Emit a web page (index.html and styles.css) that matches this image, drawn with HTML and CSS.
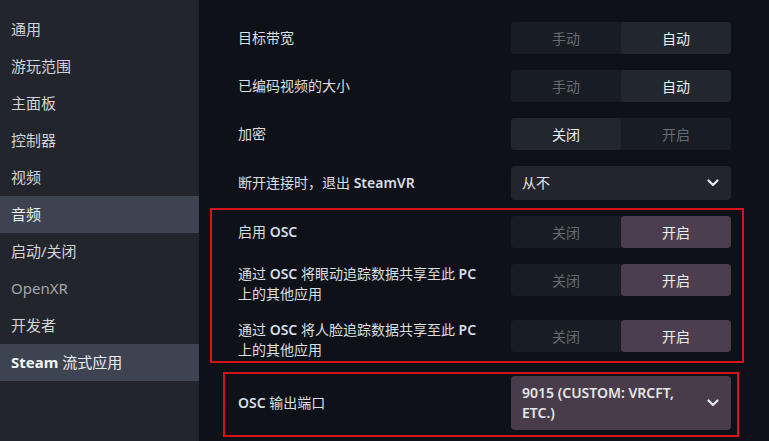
FILE: index.html
```html
<!DOCTYPE html>
<html lang="zh-CN">
<head>
<meta charset="utf-8">
<title>SteamVR 设置</title>
<link rel="stylesheet" href="styles.css">
</head>
<body>
<div class="app">
  <nav class="sidebar">
    <div class="nav-item">通用</div>
    <div class="nav-item">游玩范围</div>
    <div class="nav-item">主面板</div>
    <div class="nav-item">控制器</div>
    <div class="nav-item">视频</div>
    <div class="nav-item active">音频</div>
    <div class="nav-item">启动/关闭</div>
    <div class="nav-item dim">OpenXR</div>
    <div class="nav-item">开发者</div>
    <div class="nav-item active"><b class="latin-b">Steam</b> 流式应用</div>
  </nav>
  <main class="content">
    <div class="row">
      <span class="label">目标带宽</span>
      <div class="seg"><span class="opt">手动</span><span class="opt on">自动</span></div>
    </div>
    <div class="row">
      <span class="label">已编码视频的大小</span>
      <div class="seg"><span class="opt">手动</span><span class="opt on">自动</span></div>
    </div>
    <div class="row">
      <span class="label">加密</span>
      <div class="seg"><span class="opt on">关闭</span><span class="opt">开启</span></div>
    </div>
    <div class="row">
      <span class="label">断开连接时，退出 <span class="latin">SteamVR</span></span>
      <div class="select">
        <span class="select-text">从不</span>
        <svg class="chev" width="12" height="8" viewBox="0 0 12 8"><polyline points="1.5,1.5 6,6 10.5,1.5" fill="none" stroke="#e6e7ea" stroke-width="2.2" stroke-linecap="round" stroke-linejoin="round"/></svg>
      </div>
    </div>

    <div class="hl hl-a">
      <div class="row">
        <span class="label">启用 <span class="latin">OSC</span></span>
        <div class="seg"><span class="opt">关闭</span><span class="opt on purple">开启</span></div>
      </div>
      <div class="row top">
        <span class="label two">通过 <span class="latin">OSC</span> 将眼动追踪数据共享至此 <span class="latin">PC</span><br>上的其他应用</span>
        <div class="seg"><span class="opt">关闭</span><span class="opt on purple">开启</span></div>
      </div>
      <div class="row top">
        <span class="label two">通过 <span class="latin">OSC</span> 将人脸追踪数据共享至此 <span class="latin">PC</span><br>上的其他应用</span>
        <div class="seg"><span class="opt">关闭</span><span class="opt on purple">开启</span></div>
      </div>
    </div>

    <div class="hl hl-b">
      <div class="row">
        <span class="label"><span class="latin">OSC</span> 输出端口</span>
        <div class="select tall purple-bg">
          <span class="select-text latin">9015 (CUSTOM: VRCFT,<br>ETC.)</span>
          <svg class="chev" width="12" height="8" viewBox="0 0 12 8"><polyline points="1.5,1.5 6,6 10.5,1.5" fill="none" stroke="#e6e7ea" stroke-width="2.2" stroke-linecap="round" stroke-linejoin="round"/></svg>
        </div>
      </div>
    </div>
  </main>
</div>
</body>
</html>
```

FILE: styles.css
```css
html, body {
  margin: 0;
  padding: 0;
  width: 769px;
  height: 441px;
  overflow: hidden;
  background: #0e1218;
}

body {
  font-family: "Noto Sans", "Noto Sans CJK SC", sans-serif;
  color: #dcdee1;
}

.app {
  display: flex;
  width: 769px;
  height: 441px;
}

.sidebar {
  width: 199px;
  flex: none;
  background: #22252c;
  padding-top: 11px;
  box-sizing: border-box;
}

.nav-item {
  height: 37px;
  line-height: 37px;
  padding-left: 11px;
  font-size: 15px;
  color: #d2d4d8;
  white-space: nowrap;
}

.nav-item.active {
  background: #3d4350;
  color: #eceef0;
}

.nav-item.dim {
  color: #a3a7ae;
}

.latin-b {
  font-weight: 700;
  color: #f2f3f5;
}

.content {
  flex: 1;
  padding: 22px 38px 0 39px;
  box-sizing: border-box;
}

.row {
  display: flex;
  align-items: center;
}

.row + .row {
  margin-top: 16px;
}

.row.top {
  align-items: flex-start;
}

.label {
  flex: 1;
  font-size: 14px;
  line-height: 20px;
  color: #dcdee1;
  white-space: nowrap;
}

.latin {
  font-weight: 600;
  color: #d6dde4;
}

.seg {
  width: 220px;
  height: 32px;
  flex: none;
  display: flex;
  background: #181c23;
  border-radius: 4px;
}

.opt {
  flex: 1;
  display: flex;
  align-items: center;
  justify-content: center;
  font-size: 14px;
  color: #676b72;
  border-radius: 4px;
}

.opt.on {
  background: #22262e;
  color: #eceef0;
}

.opt.on.purple {
  background: #4b3f4f;
}

.select {
  width: 220px;
  height: 34px;
  flex: none;
  box-sizing: border-box;
  display: flex;
  align-items: center;
  justify-content: space-between;
  padding: 0 12px 0 11px;
  background: #22252d;
  border-radius: 4px;
}

.select-text {
  font-size: 14px;
  line-height: 20px;
  color: #e4e6e9;
}

.select.tall {
  height: 54px;
  padding-top: 7px;
  padding-bottom: 7px;
}

.select.purple-bg {
  background: #483c4a;
}

.chev {
  flex: none;
  display: block;
}

.hl {
  border: 2px solid #d8121a;
}

.hl-a {
  margin: 8px -13px 0 -28px;
  padding: 6px 11px 1px 26px;
}

.hl-b {
  margin: 9px -8px 0 -15px;
  padding: 2px 6px 5px 13px;
}
```
